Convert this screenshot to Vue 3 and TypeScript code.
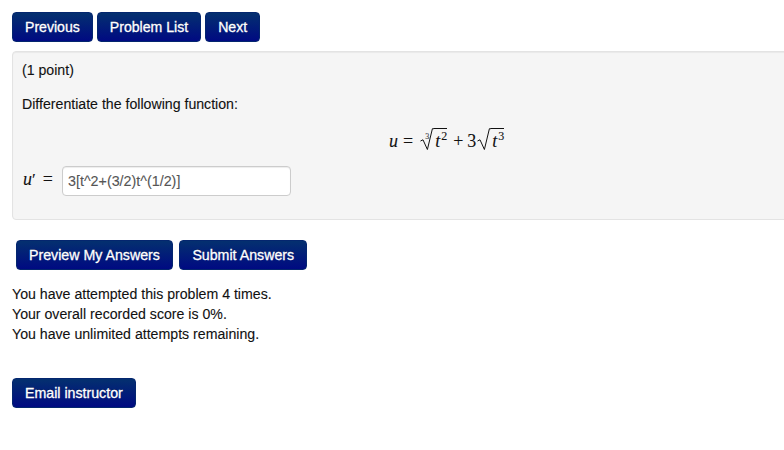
<script setup lang="ts">
const navButtons: string[] = ['Previous', 'Problem List', 'Next']
const answer = '3[t^2+(3/2)t^(1/2)]'
</script>

<template>
  <div class="page">
    <nav class="nav">
      <a v-for="b in navButtons" :key="b" class="btn nav-btn">{{ b }}</a>
    </nav>
    <section class="well">
      <p class="point">(1 point)</p>
      <p class="prompt">Differentiate the following function:</p>
      <div class="equation">
        <i>u</i><span class="eq">=</span>
        <span class="root cube">
          <sup class="index">3</sup>
          <svg class="radical" width="14" height="23" viewBox="0 0 14 23"><path d="M0.5 13 L3 11.8 L7.4 21.5 L12.4 0.7 L14 0.7" fill="none" stroke="#111" stroke-width="1"/></svg>
          <span class="radicand"><i>t</i><sup>2</sup></span>
        </span>
        <span class="plus">+</span><span class="three">3</span>
        <span class="root">
          <svg class="radical" width="14" height="23" viewBox="0 0 14 23"><path d="M0.5 13 L3 11.8 L7.4 21.5 L12.4 0.7 L14 0.7" fill="none" stroke="#111" stroke-width="1"/></svg>
          <span class="radicand"><i>t</i><sup>3</sup></span>
        </span>
      </div>
      <div class="answer">
        <span class="label"><i>u</i><span class="prime">′</span><span class="eq">=</span></span>
        <input class="input" type="text" :value="answer" />
      </div>
    </section>
    <div class="actions">
      <a class="btn">Preview My Answers</a>
      <a class="btn">Submit Answers</a>
    </div>
    <div class="status">
      <div>You have attempted this problem 4 times.</div>
      <div>Your overall recorded score is 0%.</div>
      <div>You have unlimited attempts remaining.</div>
    </div>
    <a class="btn email">Email instructor</a>
  </div>
</template>

<style scoped>
.page {
  width: 784px;
  height: 450px;
  overflow: hidden;
  box-sizing: border-box;
  padding: 12px 0 0 12px;
  font-family: "Liberation Sans", Arial, sans-serif;
  font-size: 14.15px;
  line-height: 20px;
  color: #111;
  background: #fff;
  -webkit-text-stroke: 0.1px currentColor;
}
.btn {
  display: inline-block;
  box-sizing: border-box;
  height: 30px;
  padding: 0 12px;
  font-size: 14.2px;
  line-height: 28px;
  color: #fff;
  white-space: nowrap;
  -webkit-text-stroke: 0.3px #fff;
  text-shadow: 0 -1px 0 rgba(0, 0, 0, 0.25);
  border: 1px solid #04266f;
  border-radius: 4px;
  background: linear-gradient(to bottom, #04306f, #000a82);
}
.nav-btn {
  font-size: 14.1px;
}
.nav {
  display: flex;
  gap: 4px;
}
.well {
  width: 800px;
  height: 169px;
  box-sizing: border-box;
  margin-top: 9px;
  padding: 8px 9px;
  background: #f5f5f5;
  border: 1px solid #e3e3e3;
  border-radius: 4px;
  box-shadow: inset 0 1px 1px rgba(0, 0, 0, 0.05);
}
.point, .prompt {
  margin: 0;
}
.prompt {
  margin-top: 14px;
}
.equation {
  position: absolute;
  left: 389px;
  top: 128px;
  display: flex;
  align-items: baseline;
  font-family: "Liberation Serif", "Times New Roman", serif;
  font-size: 18px;
  line-height: 22px;
  color: #111;
}
.eq {
  margin: 0 7px 0 5px;
}
.plus {
  margin: 0 4px 0 6px;
}
.three {
  margin-right: 1px;
}
.root {
  position: relative;
  display: inline-flex;
  align-items: baseline;
  padding-left: 14px;
}
.radical {
  position: absolute;
  left: 0;
  top: 0;
}
.radicand {
  border-top: 1px solid #111;
  line-height: 25px;
  padding-left: 1px;
  white-space: nowrap;
}
.radicand sup {
  font-size: 12px;
  line-height: 0;
  position: relative;
  top: 0;
  margin-left: 1px;
}
.index {
  position: absolute;
  left: 5px;
  top: 4px;
  font-size: 8px;
  line-height: 10px;
  color: #444;
}
.answer {
  display: flex;
  align-items: center;
  position: absolute;
  left: 23px;
  top: 166px;
  height: 30px;
}
.label {
  width: 39px;
  margin-top: -4px;
  display: flex;
  align-items: baseline;
  font-family: "Liberation Serif", "Times New Roman", serif;
  font-size: 18px;
  color: #111;
}
.prime {
  font-size: 17px;
  margin-right: 1px;
}
.label .eq {
  margin-left: 6px;
  margin-right: 0;
}
.input {
  width: 229px;
  height: 30px;
  box-sizing: border-box;
  padding: 4px 5px;
  font-family: "Liberation Sans", Arial, sans-serif;
  font-size: 14.3px;
  color: #555;
  background: #fff;
  border: 1px solid #ccc;
  border-radius: 4px;
  box-shadow: inset 0 1px 1px rgba(0, 0, 0, 0.075);
  outline: none;
}
.actions {
  display: flex;
  gap: 6.5px;
  margin: 20px 0 0 4px;
}
.status {
  margin-top: 14px;
}
.email {
  margin-top: 34px;
}
</style>
